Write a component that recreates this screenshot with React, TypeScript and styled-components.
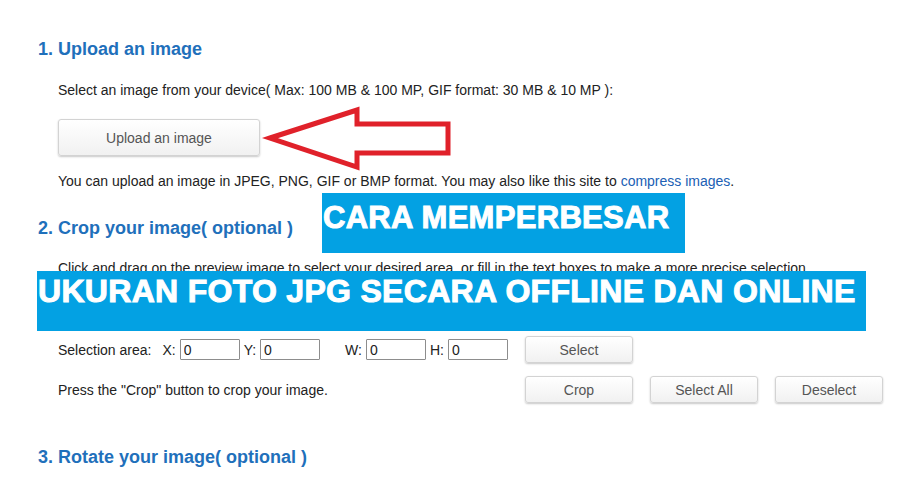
import React from "react";
import styled, { createGlobalStyle } from "styled-components";

const GlobalStyle = createGlobalStyle`
  html, body {
    margin: 0;
    padding: 0;
    background: #fff;
  }
  body {
    font-family: "Liberation Sans", Arial, sans-serif;
    color: #222;
  }
`;

const Page = styled.div`
  position: relative;
  width: 901px;
  height: 479px;
  overflow: hidden;
  padding: 38px 0 0 38px;
  box-sizing: border-box;
`;

const Section = styled.section<{ $gap?: number }>`
  margin-top: ${({ $gap }) => $gap ?? 0}px;
`;

const Heading = styled.h2`
  margin: 0;
  font-size: 18px;
  line-height: 22px;
  font-weight: 700;
  color: #1f70bb;
`;

const Content = styled.div`
  padding-left: 20px;
  display: flex;
  flex-direction: column;
  align-items: flex-start;
`;

const Text = styled.p<{ $gap?: number }>`
  margin: ${({ $gap }) => $gap ?? 0}px 0 0;
  font-size: 14px;
  line-height: 20px;
  color: #222;
  white-space: nowrap;
`;

const Link = styled.a`
  color: #2060b4;
  text-decoration: none;
`;

const Button = styled.button<{ $width?: number; $height?: number }>`
  width: ${({ $width }) => $width ?? 108}px;
  height: ${({ $height }) => $height ?? 27}px;
  padding: 0;
  border: 1px solid #d3d3d3;
  border-radius: 3px;
  background: linear-gradient(#ffffff, #f1f1f1);
  box-shadow: 0 1px 2px rgba(0, 0, 0, 0.22);
  font-family: "Liberation Sans", Arial, sans-serif;
  font-size: 14px;
  color: #555;
  cursor: pointer;
`;

const UploadButton = styled(Button)`
  margin-top: 19px;
`;

const Controls = styled.div`
  margin-top: 58px;
  display: grid;
  grid-template-columns: 467px auto;
  row-gap: 13px;
  align-items: center;
`;

const SelectionRow = styled.div`
  display: flex;
  align-items: center;
  font-size: 14px;
  color: #222;
`;

const Field = styled.label<{ $gap: number }>`
  display: flex;
  align-items: center;
  margin-left: ${({ $gap }) => $gap}px;
`;

const FieldName = styled.span`
  margin-right: 4px;
`;

const NumberBox = styled.input`
  width: 60px;
  height: 21px;
  box-sizing: border-box;
  margin: 0;
  padding: 1px 3px 0;
  border: 1px solid #8d8d8d;
  border-radius: 1px;
  font-family: "Liberation Sans", Arial, sans-serif;
  font-size: 14px;
  color: #222;
`;

const ButtonGroup = styled.div`
  display: flex;
  gap: 17px;
`;

// caption banners pasted over the page, as in the thumbnail
const Banner = styled.div<{ $left: number; $top: number; $width: number; $pad: number; $size: number }>`
  position: absolute;
  left: ${({ $left }) => $left}px;
  top: ${({ $top }) => $top}px;
  width: ${({ $width }) => $width}px;
  height: 60px;
  box-sizing: border-box;
  padding: ${({ $pad }) => $pad}px 0 0 1px;
  background: #03a1e3;
  color: #fff;
  font-family: "Liberation Sans", Arial, sans-serif;
  font-weight: 700;
  font-size: ${({ $size }) => $size}px;
  line-height: 37px;
  letter-spacing: 0.3px;
  -webkit-text-stroke: 1px #fff;
  white-space: nowrap;
`;

const Arrow = styled.svg`
  position: absolute;
  left: 260px;
  top: 100px;
`;

export default function App() {
  return (
    <Page>
      <GlobalStyle />
      <Section>
        <Heading>1. Upload an image</Heading>
        <Content>
          <Text $gap={20}>
            Select an image from your device( Max: 100 MB &amp; 100 MP, GIF format: 30 MB &amp; 10 MP ):
          </Text>
          <UploadButton $width={202} $height={37}>
            Upload an image
          </UploadButton>
          <Text $gap={15}>
            You can upload an image in JPEG, PNG, GIF or BMP format. You may also like this site to{" "}
            <Link href="#">compress images</Link>.
          </Text>
        </Content>
      </Section>

      <Section $gap={26}>
        <Heading>2. Crop your image( optional )</Heading>
        <Content>
          <Text $gap={19}>
            Click and drag on the preview image to select your desired area, or fill in the text boxes to make a more precise selection.
          </Text>
          <Controls>
            <SelectionRow>
              <span>Selection area:</span>
              <Field $gap={11}>
                <FieldName>X:</FieldName>
                <NumberBox defaultValue="0" />
              </Field>
              <Field $gap={4}>
                <FieldName>Y:</FieldName>
                <NumberBox defaultValue="0" />
              </Field>
              <Field $gap={25}>
                <FieldName>W:</FieldName>
                <NumberBox defaultValue="0" />
              </Field>
              <Field $gap={4}>
                <FieldName>H:</FieldName>
                <NumberBox defaultValue="0" />
              </Field>
            </SelectionRow>
            <ButtonGroup>
              <Button>Select</Button>
            </ButtonGroup>
            <Text>Press the "Crop" button to crop your image.</Text>
            <ButtonGroup>
              <Button>Crop</Button>
              <Button>Select All</Button>
              <Button>Deselect</Button>
            </ButtonGroup>
          </Controls>
        </Content>
      </Section>

      <Section $gap={43}>
        <Heading>3. Rotate your image( optional )</Heading>
      </Section>

      <Arrow width="200" height="75" viewBox="0 0 200 75">
        <polygon
          points="10,38 97,10 97,24 188,24 188,53 97,53 97,67"
          fill="#fff"
          stroke="#e0212a"
          strokeWidth="5"
          strokeLinejoin="miter"
          strokeMiterlimit="10"
        />
      </Arrow>

      <Banner $left={322} $top={193} $width={363} $pad={6} $size={31}>
        CARA MEMPERBESAR
      </Banner>
      <Banner $left={37} $top={271} $width={829} $pad={2} $size={32}>
        UKURAN FOTO JPG SECARA OFFLINE DAN ONLINE
      </Banner>
    </Page>
  );
}
